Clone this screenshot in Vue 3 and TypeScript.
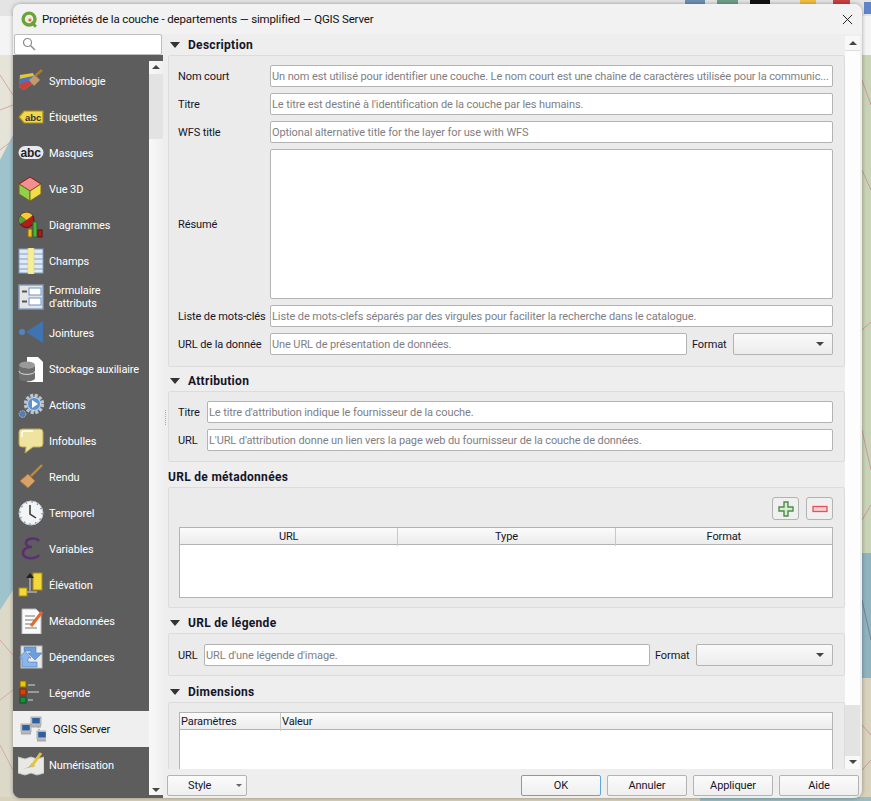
<script setup lang="ts">
interface NavItem {
  label: string
  icon: string
  active?: boolean
}

const nav: NavItem[] = [
  { label: 'Symbologie', icon: 'sym' },
  { label: 'Étiquettes', icon: 'lab' },
  { label: 'Masques', icon: 'mask' },
  { label: 'Vue 3D', icon: 'cube' },
  { label: 'Diagrammes', icon: 'diag' },
  { label: 'Champs', icon: 'fields' },
  { label: "Formulaire d'attributs", icon: 'form' },
  { label: 'Jointures', icon: 'join' },
  { label: 'Stockage auxiliaire', icon: 'aux' },
  { label: 'Actions', icon: 'act' },
  { label: 'Infobulles', icon: 'tip' },
  { label: 'Rendu', icon: 'brush' },
  { label: 'Temporel', icon: 'clock' },
  { label: 'Variables', icon: 'var' },
  { label: 'Élévation', icon: 'elev' },
  { label: 'Métadonnées', icon: 'meta' },
  { label: 'Dépendances', icon: 'dep' },
  { label: 'Légende', icon: 'leg' },
  { label: 'QGIS Server', icon: 'server', active: true },
  { label: 'Numérisation', icon: 'dig' },
]
</script>

<template>
  <div class="desk">
    <svg class="map" viewBox="0 0 871 801" preserveAspectRatio="none">
      <rect width="871" height="801" fill="#dcd9c9" />
      <!-- left strip of the map -->
      <path d="M0 55H13V135L0 160Z" fill="#e6e3d8" />
      <path d="M0 160L13 135V590L0 610Z" fill="#9fc3cc" />
      <path d="M0 75L13 95M0 110L13 105M0 150L13 140M0 640L13 655M0 700L13 690M0 745L13 770" stroke="#d8a8b0" fill="none" />
      <!-- right strip of the map -->
      <path d="M862 55H871V553H862Z" fill="#c9d3b6" />
      <path d="M862 553H871V678H862Z" fill="#8fb4c0" />
      <path d="M862 678H871V801H862Z" fill="#d8d2bc" />
      <path d="M862 80L871 105M862 170L871 190M862 330L871 322M862 430L871 470M862 520L871 505M862 725L871 735M862 770L871 760" stroke="#c898a4" fill="none" />
      <path d="M862 600L871 640" stroke="#7a7f98" fill="none" />
      <!-- strip below the window -->
      <path d="M0 797H700V801H0Z" fill="#d8d2bc" />
      <path d="M700 797H871V801H700Z" fill="#9dbcc2" />
      <!-- main window toolbars behind -->
      <rect width="871" height="55" fill="#f4f4f4" />
      <rect width="871" height="16" fill="#e4e4e4" />
      <rect x="685" width="20" height="4" fill="#6f8fb0" />
      <rect x="717" width="21" height="4" fill="#6f9f88" />
      <rect x="750" width="20" height="4" fill="#111" />
      <rect x="800" width="16" height="4" fill="#f0c040" />
      <rect x="833" width="17" height="4" fill="#c84040" />
      <rect x="864" y="2" width="7" height="12" fill="#5f85c8" />
    </svg>

    <div class="win">
      <header class="title">
        <svg class="logo" viewBox="0 0 20 20">
          <circle cx="9.500" cy="9.500" r="7" fill="none" stroke="#6aa436" stroke-width="4" />
          <circle cx="10" cy="10" r="3.400" fill="#f0e6c8" />
          <circle cx="10.500" cy="10.500" r="1.800" fill="#dc6a3a" />
          <path d="M12.500 13l5 5.500" stroke="#6aa436" stroke-width="3.400" />
        </svg>
        <span>Propriétés de la couche - departements — simplified — QGIS Server</span>
        <svg class="close" viewBox="0 0 12 12"><path d="M1 1l10 10M11 1L1 11" stroke="#111" stroke-width="1" fill="none" /></svg>
      </header>

      <div class="body">
        <aside class="side">
          <div class="search">
            <svg viewBox="0 0 14 14" width="14" height="14"><circle cx="5.500" cy="5.500" r="4" fill="none" stroke="#8a8a8a" stroke-width="1.200" /><path d="M8.500 8.500l4.500 4.500" stroke="#8a8a8a" stroke-width="1.400" /></svg>
          </div>
          <div class="side-row">
            <nav class="nav">
              <div v-for="n in nav" :key="n.label" class="nav-item" :class="{ active: n.active }">
                <svg class="ico" viewBox="0 0 26 26">
                  <template v-if="n.icon === 'sym'">
                    <path d="M2 7l13-2 3 8-12 9-5-3z" fill="#e6c341" />
                    <path d="M1 11l14-3 2 5-11 9-5-3z" fill="#4a74b8" />
                    <path d="M1 16l10-3 3 3-8 6-5-3z" fill="#c8413a" />
                    <path d="M11 12l6-5 5 5-6 6z" fill="#c49a6c" />
                    <path d="M17 8l7-6" stroke="#b07c28" stroke-width="2.400" />
                  </template>
                  <template v-else-if="n.icon === 'lab'">
                    <path d="M1 13l5-6h19v12H6z" fill="#f2d84a" stroke="#a88d10" stroke-width="1.200" />
                    <text x="7" y="16.500" class="abc">abc</text>
                  </template>
                  <template v-else-if="n.icon === 'mask'">
                    <rect x="0.500" y="6" width="25" height="13" rx="6.500" fill="#e6e8f2" />
                    <text x="2.500" y="17" class="abc big">abc</text>
                  </template>
                  <template v-else-if="n.icon === 'cube'">
                    <path d="M12 1l11 7-11 7L1 8z" fill="#f28f8f" stroke="#8a1414" />
                    <path d="M1 8l11 7v10L1 18z" fill="#8fd14a" stroke="#7a6a14" />
                    <path d="M23 8l-11 7v10l11-7z" fill="#f2dc4a" stroke="#7a6a14" />
                  </template>
                  <template v-else-if="n.icon === 'diag'">
                    <circle cx="8.500" cy="8" r="7.500" fill="#b01c1c" stroke="#5a1010" />
                    <path d="M8.500 8L2 12a7.500 7.500 0 0 1 0-8z" fill="#4fa63a" />
                    <path d="M8.500 8L2.500 3.500a7.500 7.500 0 0 1 12 0z" fill="#f0cf30" />
                    <rect x="10" y="17" width="4" height="8" fill="#f0c020" stroke="#8a6a10" />
                    <rect x="15" y="10" width="4" height="15" fill="#4fb040" stroke="#2a6a20" />
                    <rect x="20" y="18" width="4" height="7" fill="#b01c1c" stroke="#5a1010" />
                  </template>
                  <template v-else-if="n.icon === 'fields'">
                    <rect x="1" y="1" width="24" height="24" fill="#dfe8f4" stroke="#7f9ec4" />
                    <path d="M1 6h24M1 11h24M1 16h24M1 21h24" stroke="#7f9ec4" />
                    <rect x="10" y="0" width="6" height="26" fill="#f7ee9a" stroke="#e0d060" stroke-width=".5" />
                  </template>
                  <template v-else-if="n.icon === 'form'">
                    <rect x="1" y="1" width="24" height="24" fill="#e4e4e4" stroke="#7f9ec4" stroke-width="1.400" />
                    <rect x="11" y="4" width="12" height="7" fill="#fff" stroke="#6f93c4" />
                    <rect x="11" y="14" width="12" height="7" fill="#fff" stroke="#6f93c4" />
                    <path d="M4 7.500h5M4 17.500h5" stroke="#555" stroke-width="2" />
                  </template>
                  <template v-else-if="n.icon === 'join'">
                    <circle cx="4" cy="12" r="3" fill="#4f86c0" />
                    <path d="M8 12L25 1v22z" fill="#3f74b0" />
                  </template>
                  <template v-else-if="n.icon === 'aux'">
                    <path d="M9 1h11l5 5v20H9z" fill="#fff" />
                    <ellipse cx="9" cy="9" rx="8" ry="3.500" fill="#9a9a9a" />
                    <path d="M1 9v13c0 4.500 16 4.500 16 0V9c0 4.500-16 4.500-16 0z" fill="#6e6e6e" />
                    <path d="M1 15c0 4.500 16 4.500 16 0" stroke="#ddd" fill="none" />
                  </template>
                  <template v-else-if="n.icon === 'act'">
                    <circle cx="16" cy="12" r="8.500" fill="#4f86c0" stroke="#c4c4c4" stroke-width="3.400" stroke-dasharray="3 1.500" />
                    <circle cx="16" cy="12" r="6.500" fill="#5f93cc" stroke="#eee" stroke-width=".8" />
                    <path d="M14 8l6 4-6 4z" fill="#fff" />
                    <circle cx="4.500" cy="22" r="3.400" fill="#4f7fb5" stroke="#bfbfbf" stroke-dasharray="1.500 1" />
                  </template>
                  <template v-else-if="n.icon === 'tip'">
                    <path d="M4 1h18a3 3 0 0 1 3 3v12a3 3 0 0 1-3 3H15l-8 6 1-6H4a3 3 0 0 1-3-3V4a3 3 0 0 1 3-3z" fill="#efe3a0" stroke="#b8a84a" />
                    <path d="M4 9V5q0-2 3-2h8" stroke="#fff" fill="none" stroke-width="1.500" />
                  </template>
                  <template v-else-if="n.icon === 'brush'">
                    <path d="M2 17l8-7 7 7-7 7z" fill="#d8a368" stroke="#a8743c" />
                    <path d="M13 12L24 1" stroke="#c58a30" stroke-width="2.400" />
                  </template>
                  <template v-else-if="n.icon === 'clock'">
                    <circle cx="13" cy="13" r="12" fill="#f2f4f6" stroke="#c8ccd0" />
                    <circle cx="13" cy="13" r="11" fill="none" stroke="#5f85b0" stroke-width="1.200" stroke-dasharray="1.500 4.260" />
                    <path d="M12 5v9l6 4" stroke="#333" stroke-width="1.500" fill="none" />
                  </template>
                  <template v-else-if="n.icon === 'var'">
                    <path d="M21 5c-3-4-13-3-13 2 0 3 3 4 6 4-5 0-9 2-9 6 0 6 12 7 16 2" fill="none" stroke="#5b2f73" stroke-width="2.600" />
                  </template>
                  <template v-else-if="n.icon === 'elev'">
                    <rect x="15" y="1" width="9" height="17" fill="#f2d83a" stroke="#a88d10" />
                    <rect x="1" y="16" width="8" height="8" fill="#f2d83a" stroke="#a88d10" />
                    <path d="M9 20h10M12 19V3" stroke="#9a9a9a" stroke-width="2" />
                    <path d="M12 1l-4 5h8z" fill="#222" />
                  </template>
                  <template v-else-if="n.icon === 'meta'">
                    <path d="M4 1h14l5 5v20H4z" fill="#fafafa" stroke="#bbb" />
                    <path d="M7 8h10M7 12h12M7 16h8M7 20h12" stroke="#777" />
                    <path d="M13 18L24 4" stroke="#e4692b" stroke-width="3" />
                  </template>
                  <template v-else-if="n.icon === 'dep'">
                    <rect x="3" y="2" width="21" height="22" fill="#e9e9e9" stroke="#bbb" />
                    <path d="M6 3h12v6h6l-7 7-7-7h3V7H6z" fill="#6a9fe0" stroke="#4a7cc0" stroke-width=".6" />
                    <path d="M1 14l6-7 6 7h-3v4h9v5H4v-9z" fill="#8ab6ec" stroke="#4a7cc0" stroke-width=".6" />
                  </template>
                  <template v-else-if="n.icon === 'leg'">
                    <rect x="2" y="1" width="6" height="6" fill="#f5c400" stroke="#7a6a10" />
                    <rect x="2" y="9" width="6" height="6" fill="#e33c00" stroke="#7a2a10" />
                    <rect x="2" y="17" width="6" height="6" fill="#1a8c3c" stroke="#0c5020" />
                    <path d="M10 5h7M10 12h11M10 20h5" stroke="#9a9a9a" stroke-width="1.800" />
                  </template>
                  <template v-else-if="n.icon === 'server'">
                    <path d="M5 14l11-9 5 14" stroke="#888" fill="none" stroke-dasharray="1.500 1" />
                    <g v-for="p in [[1, 8], [11, 1], [17, 15]]" :key="p[0]">
                      <rect :x="p[0]" :y="p[1]" width="10" height="8" fill="#cfcfcf" stroke="#888" stroke-width=".6" />
                      <rect :x="p[0] + 1.200" :y="p[1] + 1" width="7.600" height="5.500" fill="#2e5f9e" />
                      <rect :x="p[0]" :y="p[1] + 8.300" width="10" height="2.200" fill="#aaa" />
                    </g>
                  </template>
                  <template v-else>
                    <path d="M0 5l7 2 6-2 6 2 7-2v16l-7 2-6-2-6 2-7-2z" fill="#e9e9e4" stroke="#c4c4c0" />
                    <path d="M5 17l6-2 3-4 3 3z" fill="#8a8a8a" />
                    <path d="M13 15L23 1" stroke="#e6c341" stroke-width="3" />
                  </template>
                </svg>
                <span>{{ n.label }}</span>
              </div>
            </nav>
            <div class="side-scroll">
              <i class="arrow up"></i>
              <div class="side-thumb"></div>
              <div class="grow"></div>
              <i class="arrow down"></i>
            </div>
          </div>
        </aside>

        <div class="main">
          <div class="panel-wrap">
            <div class="panels">
              <section class="sec">
                <h3><i class="tri"></i>Description</h3>
                <div class="box form">
                  <div class="row">
                    <label>Nom court</label>
                    <div class="inp">Un nom est utilisé pour identifier une couche. Le nom court est une chaîne de caractères utilisée pour la communic...</div>
                  </div>
                  <div class="row">
                    <label>Titre</label>
                    <div class="inp">Le titre est destiné à l'identification de la couche par les humains.</div>
                  </div>
                  <div class="row">
                    <label>WFS title</label>
                    <div class="inp">Optional alternative title for the layer for use with WFS</div>
                  </div>
                  <div class="row">
                    <label>Résumé</label>
                    <div class="inp area"></div>
                  </div>
                  <div class="row">
                    <label>Liste de mots-clés</label>
                    <div class="inp">Liste de mots-clefs séparés par des virgules pour faciliter la recherche dans le catalogue.</div>
                  </div>
                  <div class="row">
                    <label>URL de la donnée</label>
                    <div class="inp">Une URL de présentation de données.</div>
                    <label class="fmt">Format</label>
                    <div class="combo"><i class="arrow down"></i></div>
                  </div>
                </div>
              </section>

              <section class="sec attr">
                <h3><i class="tri"></i>Attribution</h3>
                <div class="box form short">
                  <i class="grip"></i>
                  <div class="row">
                    <label>Titre</label>
                    <div class="inp">Le titre d'attribution indique le fournisseur de la couche.</div>
                  </div>
                  <div class="row">
                    <label>URL</label>
                    <div class="inp">L'URL d'attribution donne un lien vers la page web du fournisseur de la couche de données.</div>
                  </div>
                </div>
              </section>

              <section class="sec meta">
                <h3 class="plain">URL de métadonnées</h3>
                <div class="box metabox">
                  <div class="tools">
                    <button class="tool">
                      <svg viewBox="0 0 16 16" width="16" height="16"><path d="M6 1h4v5h5v4h-5v5H6v-5H1V6h5z" fill="#d8ecd0" stroke="#4f8a4f" stroke-width="1.400" /></svg>
                    </button>
                    <button class="tool">
                      <svg viewBox="0 0 16 8" width="16" height="8"><rect x="1" y="1.500" width="14" height="5" fill="#f8d0d0" stroke="#e8505a" stroke-width="1.300" /></svg>
                    </button>
                  </div>
                  <div class="table">
                    <div class="thead center"><span>URL</span><span>Type</span><span>Format</span></div>
                    <div class="tbody"></div>
                  </div>
                </div>
              </section>

              <section class="sec leg">
                <h3><i class="tri"></i>URL de légende</h3>
                <div class="box form short">
                  <div class="row">
                    <label>URL</label>
                    <div class="inp">URL d'une légende d'image.</div>
                    <label class="fmt">Format</label>
                    <div class="combo wide"><i class="arrow down"></i></div>
                  </div>
                </div>
              </section>

              <section class="sec dim">
                <h3><i class="tri"></i>Dimensions</h3>
                <div class="box dimbox">
                  <div class="table">
                    <div class="thead two"><span>Paramètres</span><span>Valeur</span></div>
                    <div class="tbody tall"></div>
                  </div>
                </div>
              </section>
            </div>
            <div class="main-scroll">
              <i class="arrow up"></i>
              <div class="main-thumb"></div>
              <div class="grow"></div>
              <i class="arrow down"></i>
            </div>
          </div>

          <footer class="foot">
            <button class="btn style">Style<i class="arrow down small"></i></button>
            <div class="grow"></div>
            <button class="btn ok">OK</button>
            <button class="btn">Annuler</button>
            <button class="btn">Appliquer</button>
            <button class="btn">Aide</button>
          </footer>
        </div>
      </div>
    </div>
  </div>
</template>

<style>
body { margin: 0; }
</style>

<style scoped>
.desk {
  position: relative;
  width: 871px;
  height: 801px;
  overflow: hidden;
  font-family: Roboto, "Liberation Sans", sans-serif;
  font-size: 11px;
  letter-spacing: -0.1px;
  color: #14142a;
}
.map { position: absolute; inset: 0; width: 100%; height: 100%; }
.win {
  position: absolute;
  left: 13px;
  top: 4px;
  width: 849px;
  height: 794px;
  background: #eeeeee;
  border-radius: 8px;
  overflow: hidden;
  box-shadow: 0 0 4px rgba(0, 0, 0, .35);
  display: flex;
  flex-direction: column;
}
.title {
  height: 30px;
  flex: none;
  display: flex;
  align-items: center;
  padding: 0 8px;
  gap: 4px;
  background: #f2f2f2;
  font-size: 11.500px;
  letter-spacing: -0.15px;
  color: #111;
}
.logo { width: 17px; height: 17px; }
.close { width: 11px; height: 11px; margin-left: auto; margin-right: 1px; }
.body { flex: 1; display: flex; min-height: 0; }
.side { width: 150px; flex: none; display: flex; flex-direction: column; }
.search {
  height: 21px;
  margin-left: 1px;
  background: #fff;
  border: 1px solid #bdbdbd;
  border-radius: 2px;
  box-sizing: border-box;
  width: 148px;
  padding: 2px 0 0 7px;
  flex: none;
}
.side-row { flex: 1; display: flex; min-height: 0; background: #5d5d5d; }
.nav { width: 136px; background: #5d5d5d; flex: none; padding-top: 8px; overflow: hidden; }
.nav-item {
  height: 36px;
  display: flex;
  align-items: center;
  gap: 5px;
  padding-left: 5px;
  color: #fff;
  box-sizing: border-box;
  line-height: 13px;
  white-space: nowrap;
}
.nav-item.active { background: #efefef; color: #111; padding-left: 7px; gap: 7px; }
.nav-item:nth-child(7) span { width: 70px; white-space: normal; }
.ico { width: 26px; height: 26px; flex: none; }
.abc { font-family: "Liberation Sans", sans-serif; font-size: 9.500px; font-weight: 700; fill: #333; }
.abc.big { font-size: 12px; fill: #222; }
.side-scroll {
  width: 14px;
  margin: 6px 0 3px;
  background: linear-gradient(90deg, #f8f8f8, #f0f0f0);
  display: flex;
  flex-direction: column;
  align-items: center;
  padding: 4px 0 3px;
  box-sizing: border-box;
}
.side-thumb { width: 14px; height: 65px; background: #e3e3e3; margin-top: 5px; }
.grow { flex: 1; }
.arrow { width: 0; height: 0; display: block; flex: none; border-left: 4px solid transparent; border-right: 4px solid transparent; }
.arrow.up { border-bottom: 4px solid #444; }
.arrow.down { border-top: 4px solid #444; }
.arrow.small { border-left-width: 3px; border-right-width: 3px; border-top-width: 3px; border-top-color: #666; }

.main { flex: 1; min-width: 0; display: flex; flex-direction: column; margin-top: 2px; }
.panel-wrap { flex: 1; display: flex; min-height: 0; padding-right: 2px; }
.panels { flex: 1; overflow: hidden; padding-left: 5px; }
.main-scroll {
  width: 15px;
  flex: none;
  background: #f8f8f8;
  display: flex;
  flex-direction: column;
  align-items: center;
  padding: 5px 0 5px;
  box-sizing: border-box;
}
.main-thumb { width: 15px; height: 655px; background: #fdfdfd; margin-top: 5px; border-top: 1px solid #ddd; box-sizing: border-box; }
.main-scroll .grow { background: #e3e3e3; width: 15px; margin: 0 0 4px; }

.sec h3 {
  margin: 0;
  height: 19px;
  font-size: 12px;
  font-weight: 700;
  letter-spacing: 0.3px;
  display: flex;
  align-items: center;
  gap: 8px;
  padding-bottom: 1px;
  box-sizing: border-box;
  color: #14142a;
}
.sec h3.plain { height: 20px; padding-bottom: 0; }
.dim.sec h3 { height: 20px; }
.tri { width: 0; height: 0; border-left: 5px solid transparent; border-right: 5px solid transparent; border-top: 6px solid #333; margin-left: 2px; }
.box { border: 1px solid #dcdcdc; background: #ebebeb; border-radius: 2px; box-sizing: border-box; }
.form { padding: 9px 11px 11px 9px; display: flex; flex-direction: column; gap: 6px; }
.form.short { padding: 9px 11px 10px 9px; position: relative; }
.leg .form.short { padding: 10px 11px 9px 9px; }
.row { display: flex; align-items: center; }
.row label { flex: none; width: 92px; white-space: nowrap; padding-top: 1px; }
.inp {
  flex: 1;
  min-width: 0;
  height: 22px;
  box-sizing: border-box;
  background: #fff;
  border: 1px solid #b3b3b3;
  border-radius: 2px;
  padding: 0 1px;
  line-height: 22px;
  color: #7e7e84;
  white-space: nowrap;
  overflow: hidden;
}
.inp.area { height: 150px; }
.row label.fmt { width: 35px; margin: 0 6px 0 5px; }
.combo {
  width: 100px;
  height: 22px;
  box-sizing: border-box;
  flex: none;
  border: 1px solid #b3b3b3;
  border-radius: 2px;
  background: linear-gradient(#fafafa, #ececec);
  display: flex;
  align-items: center;
  justify-content: flex-end;
  padding-right: 8px;
}
.combo.wide { width: 137px; }
.attr .row label { width: 29px; }
.attr { margin-top: 5px; }
.leg .row label { width: 26px; }
.leg .row label.fmt { width: 35px; }
.meta { margin-top: 5px; }
.leg { margin-top: 6px; }
.dim { margin-top: 6px; }
.grip {
  position: absolute;
  left: -4px;
  top: 18px;
  height: 15px;
  border-left: 1px dotted #aaa;
}
.metabox { padding: 9px 11px 10px 10px; height: 121px; }
.tools { display: flex; justify-content: flex-end; gap: 7px; margin-bottom: 7px; }
.tool {
  width: 27px;
  height: 23px;
  padding: 0;
  display: flex;
  align-items: center;
  justify-content: center;
  background: #f0f0f0;
  border: 1px solid #b3b3b3;
  border-radius: 3px;
}
.table { background: #fff; border: 1px solid #b3b3b3; box-sizing: border-box; }
.thead {
  height: 16px;
  display: grid;
  grid-template-columns: 1fr 1fr 1fr;
  background: linear-gradient(#fbfbfb, #ececec);
  border-bottom: 1px solid #b3b3b3;
  line-height: 18px;
}
.thead span + span { border-left: 1px solid #c8c8c8; }
.thead.center { text-align: center; }
.thead.two { grid-template-columns: 100px 1fr; }
.thead.two span { padding-left: 1px; }
.tbody { height: 52px; }
.tbody.tall { height: 60px; }
.dimbox { padding: 9px 11px 0 10px; height: 90px; overflow: hidden; }

.foot { height: 29px; flex: none; display: flex; align-items: flex-start; gap: 6px; padding: 6px 3px 0 4px; box-sizing: border-box; }
.btn {
  width: 80px;
  height: 21px;
  padding: 0;
  font: inherit;
  letter-spacing: inherit;
  color: #14142a;
  border: 1px solid #b3b3b3;
  border-radius: 2px;
  background: linear-gradient(#fbfbfb, #efefef);
}
.btn.ok { border-color: #5ba6dc; }
.btn.style { display: flex; align-items: center; padding: 0 4px 0 20px; box-sizing: border-box; }
.btn.style .arrow { margin-left: auto; }
</style>
